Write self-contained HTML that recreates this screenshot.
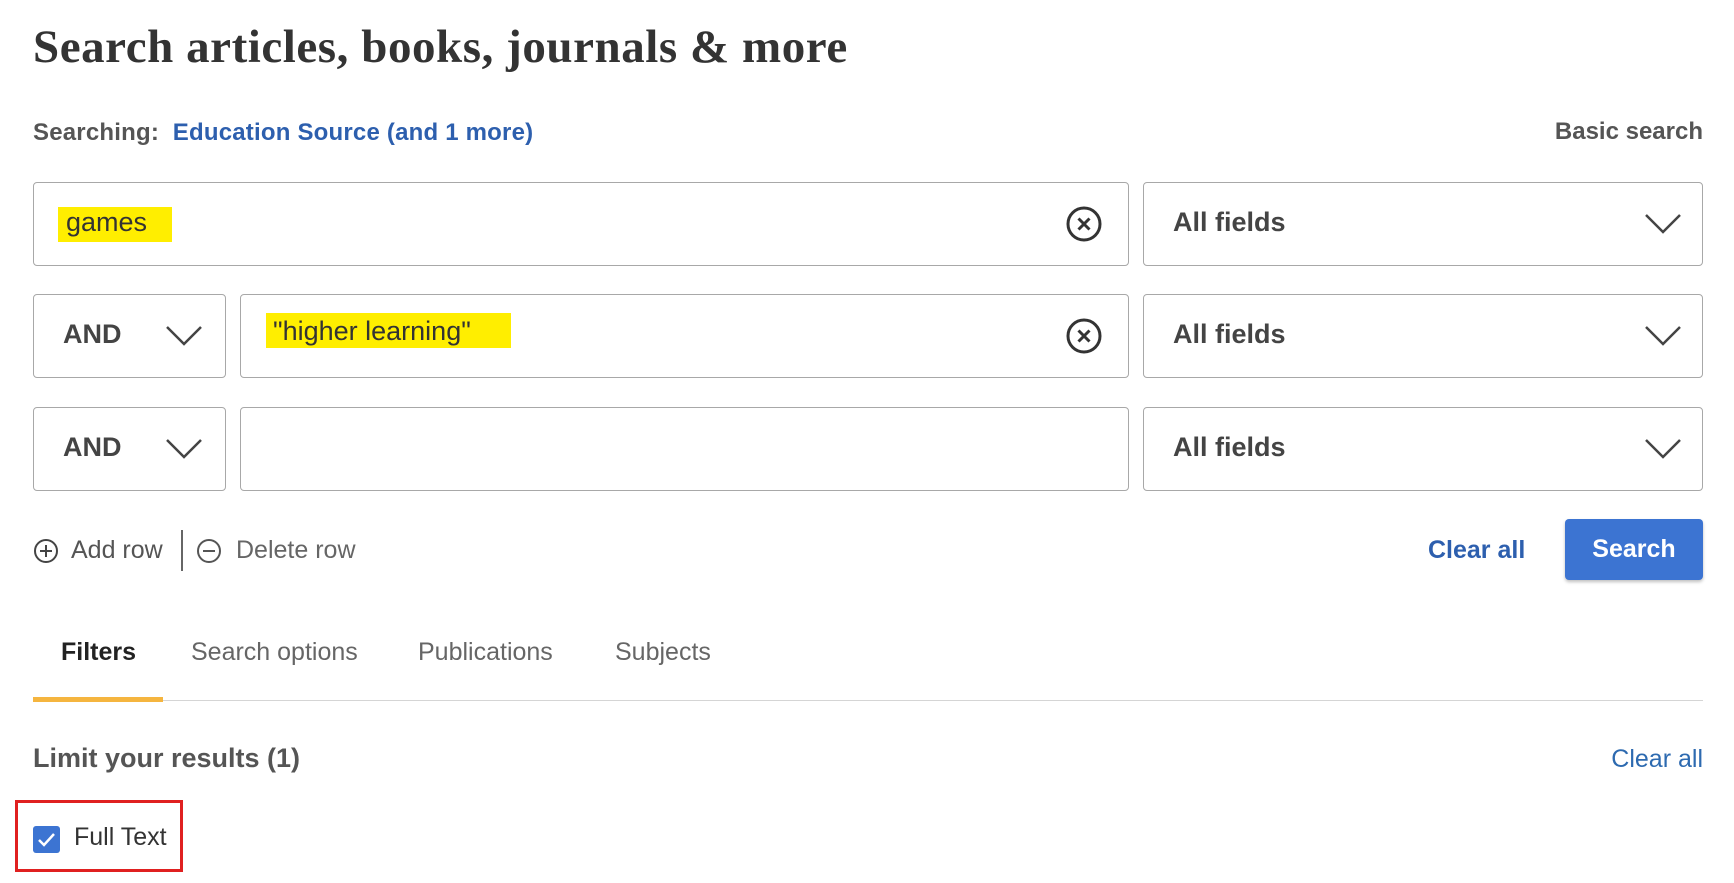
<!DOCTYPE html>
<html><head><meta charset="utf-8"><style>
body{margin:0;width:1734px;height:883px;background:#fff;position:relative;overflow:hidden;font-family:"Liberation Sans",sans-serif;color:#444}
.a{position:absolute}
.box{position:absolute;border:1px solid #a8a8a8;border-radius:4px;box-sizing:border-box;background:#fff}
.t{position:absolute;white-space:nowrap}
.fld{font-size:27px;font-weight:bold;color:#444;left:29px;top:24px}
</style></head><body>
<div class="t" style="left:33px;top:20px;font-family:'Liberation Serif',serif;font-weight:bold;font-size:47px;color:#333;letter-spacing:0.55px">Search articles, books, journals &amp; more</div>
<div class="t" style="left:33px;top:119px;font-size:24px;font-weight:bold;color:#555;letter-spacing:0.2px">Searching:&nbsp; <span style="color:#2d5fae">Education Source (and 1 more)</span></div>
<div class="t" style="right:31px;top:118px;font-size:24px;font-weight:bold;color:#555">Basic search</div>

<div class="box" style="left:33px;top:182px;width:1096px;height:84px">
 <div class="a" style="left:24px;top:24px;width:114px;height:35px;background:#ffee00"></div>
 <div class="t" style="left:32px;top:24px;font-size:27px;color:#333">games</div>
</div>
<div class="box" style="left:240px;top:294px;width:889px;height:84px">
 <div class="a" style="left:25px;top:18px;width:245px;height:35px;background:#ffee00"></div>
 <div class="t" style="left:32px;top:21px;font-size:27px;color:#333">"higher learning"</div>
</div>
<div class="box" style="left:240px;top:407px;width:889px;height:84px"></div>
<svg class="a" style="left:1065px;top:205px" width="38" height="38" viewBox="0 0 38 38"><circle cx="19" cy="19" r="16" fill="none" stroke="#333" stroke-width="3"/><path d="M13.5 13.5L24.5 24.5M24.5 13.5L13.5 24.5" stroke="#333" stroke-width="3"/></svg>
<svg class="a" style="left:1065px;top:317px" width="38" height="38" viewBox="0 0 38 38"><circle cx="19" cy="19" r="16" fill="none" stroke="#333" stroke-width="3"/><path d="M13.5 13.5L24.5 24.5M24.5 13.5L13.5 24.5" stroke="#333" stroke-width="3"/></svg>

<div class="box" style="left:1143px;top:182px;width:560px;height:84px"><div class="t fld">All fields</div>
<svg class="a" style="left:500px;top:30px" width="38" height="22"><path d="M2 2L19 19L36 2" fill="none" stroke="#444" stroke-width="2.5"/></svg></div>
<div class="box" style="left:1143px;top:294px;width:560px;height:84px"><div class="t fld">All fields</div>
<svg class="a" style="left:500px;top:30px" width="38" height="22"><path d="M2 2L19 19L36 2" fill="none" stroke="#444" stroke-width="2.5"/></svg></div>
<div class="box" style="left:1143px;top:407px;width:560px;height:84px"><div class="t fld">All fields</div>
<svg class="a" style="left:500px;top:30px" width="38" height="22"><path d="M2 2L19 19L36 2" fill="none" stroke="#444" stroke-width="2.5"/></svg></div>

<div class="box" style="left:33px;top:294px;width:193px;height:84px"><div class="t fld">AND</div>
<svg class="a" style="left:131px;top:30px" width="38" height="22"><path d="M2 2L19 19L36 2" fill="none" stroke="#444" stroke-width="2.5"/></svg></div>
<div class="box" style="left:33px;top:407px;width:193px;height:84px"><div class="t fld">AND</div>
<svg class="a" style="left:131px;top:30px" width="38" height="22"><path d="M2 2L19 19L36 2" fill="none" stroke="#444" stroke-width="2.5"/></svg></div>

<svg class="a" style="left:33px;top:538px" width="26" height="26"><circle cx="13" cy="13" r="11" fill="none" stroke="#444" stroke-width="2"/><path d="M13 7V19M7 13H19" stroke="#444" stroke-width="2"/></svg>
<div class="t" style="left:71px;top:536px;font-size:25px;color:#555">Add row</div>
<div class="a" style="left:181px;top:530px;width:2px;height:41px;background:#666"></div>
<svg class="a" style="left:196px;top:538px" width="26" height="26"><circle cx="13" cy="13" r="11" fill="none" stroke="#555" stroke-width="2"/><path d="M7 13H19" stroke="#555" stroke-width="2"/></svg>
<div class="t" style="left:236px;top:536px;font-size:25px;color:#666">Delete row</div>
<div class="t" style="left:1428px;top:536px;font-size:25px;font-weight:bold;color:#2d5fae">Clear all</div>
<div class="a" style="left:1565px;top:519px;width:138px;height:61px;background:#3c74d2;border-radius:4px;box-shadow:0 2px 3px rgba(0,0,0,.25);color:#fff;font-size:25px;font-weight:bold;text-align:center;line-height:61px">Search</div>

<div class="t" style="left:61px;top:638px;font-size:25px;font-weight:bold;color:#222">Filters</div>
<div class="t" style="left:191px;top:638px;font-size:25px;color:#666">Search options</div>
<div class="t" style="left:418px;top:638px;font-size:25px;color:#666">Publications</div>
<div class="t" style="left:615px;top:638px;font-size:25px;color:#666">Subjects</div>
<div class="a" style="left:33px;top:700px;width:1670px;height:1px;background:#d5d5d5"></div>
<div class="a" style="left:33px;top:697px;width:130px;height:5px;background:#f5b53f"></div>

<div class="t" style="left:33px;top:743px;font-size:27px;font-weight:bold;color:#555">Limit your results (1)</div>
<div class="t" style="right:31px;top:745px;font-size:25px;color:#2d6ab0">Clear all</div>
<div class="a" style="left:15px;top:800px;width:168px;height:72px;border:3px solid #e02020;box-sizing:border-box"></div>
<div class="a" style="left:33px;top:826px;width:27px;height:27px;background:#3c74d2;border-radius:3px"></div>
<svg class="a" style="left:33px;top:826px" width="27" height="27"><path d="M6 14L11 19L21 8" fill="none" stroke="#fff" stroke-width="2.5"/></svg>
<div class="t" style="left:74px;top:823px;font-size:25px;color:#333">Full Text</div>
</body></html>
